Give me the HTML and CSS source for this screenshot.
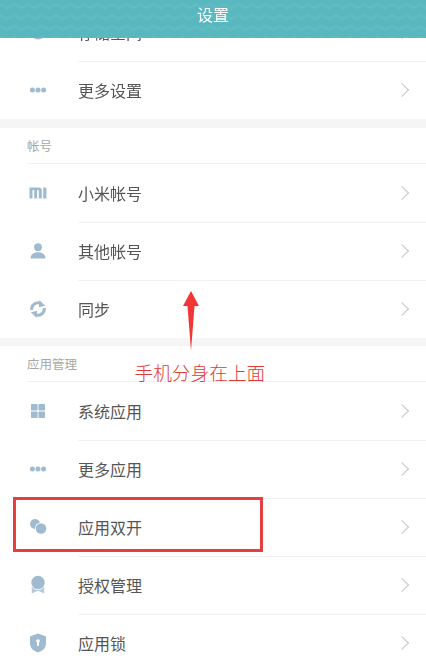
FILE: index.html
```html
<!DOCTYPE html>
<html lang="zh">
<head>
<meta charset="utf-8">
<title>设置</title>
<link rel="stylesheet" href="styles.css">
</head>
<body>
<div class="screen">
  <header class="topbar">
    <svg class="wave" aria-hidden="true">
      <defs>
        <pattern id="zig" width="28" height="11" patternUnits="userSpaceOnUse">
          <path d="M0 4 L7 8 L14 4 L21 8 L28 4" fill="none" stroke="#ffffff" stroke-opacity=".05" stroke-width="2.4"/>
        </pattern>
      </defs>
      <rect width="100%" height="100%" fill="url(#zig)"/>
    </svg>
    <span class="topbar-title">设置</span>
  </header>

  <main class="list">
    <section class="group">
      <div class="row">
        <svg class="icon" viewBox="0 0 20 20"><circle cx="10" cy="10" r="7.5" fill="#a5bfd2"/></svg>
        <span class="label">存储空间</span><span class="chev"></span>
      </div>
      <div class="row">
        <svg class="icon" viewBox="0 0 20 20"><g fill="#a0bbcf"><circle cx="4.4" cy="10" r="2.5"/><circle cx="10" cy="10" r="2.5"/><circle cx="15.6" cy="10" r="2.5"/></g></svg>
        <span class="label">更多设置</span><span class="chev"></span>
      </div>
    </section>

    <section class="group">
      <h2 class="group-title">帐号</h2>
      <div class="row">
        <svg class="icon" viewBox="0 0 20 20"><g fill="#a0bbcf"><path d="M1.5 4.500h9.500a2.800 2.800 0 0 1 2.800 2.800V15.500h-3V7.800a.8.8 0 0 0-.8-.8H9.100V15.500H6.200V7H4.500V15.500H1.500z"/><rect x="15.200" y="4.500" width="3.200" height="11"/></g></svg>
        <span class="label">小米帐号</span><span class="chev"></span>
      </div>
      <div class="row">
        <svg class="icon" viewBox="0 0 20 20"><g fill="#a0bbcf"><circle cx="10" cy="6.200" r="3.900"/><path d="M2.600 17.500c0-4.200 3-6.300 7.400-6.300s7.400 2.100 7.400 6.300z"/></g></svg>
        <span class="label">其他帐号</span><span class="chev"></span>
      </div>
      <div class="row">
        <svg class="icon" viewBox="0 0 20 20"><g fill="none" stroke="#a0bbcf" stroke-width="3"><path d="M3.700 11a6.400 6.400 0 0 1 9.200-6.500"/><path d="M16.300 9a6.400 6.400 0 0 1-9.200 6.500"/></g><g fill="#a0bbcf"><path d="M11.500 1.200 17.200 6.800 10.800 8.200z"/><path d="M8.500 18.800 2.800 13.200 9.200 11.800z"/></g></svg>
        <span class="label">同步</span><span class="chev"></span>
      </div>
    </section>

    <section class="group">
      <h2 class="group-title">应用管理</h2>
      <div class="row">
        <svg class="icon" viewBox="0 0 20 20"><g fill="#a0bbcf"><rect x="3" y="3" width="6.600" height="6.600" rx=".8"/><rect x="10.400" y="3" width="6.600" height="6.600" rx=".8"/><rect x="3" y="10.400" width="6.600" height="6.600" rx=".8"/><rect x="10.400" y="10.400" width="6.600" height="6.600" rx=".8"/></g></svg>
        <span class="label">系统应用</span><span class="chev"></span>
      </div>
      <div class="row">
        <svg class="icon" viewBox="0 0 20 20"><g fill="#a0bbcf"><circle cx="4.400" cy="10" r="2.500"/><circle cx="10" cy="10" r="2.500"/><circle cx="15.600" cy="10" r="2.500"/></g></svg>
        <span class="label">更多应用</span><span class="chev"></span>
      </div>
      <div class="row">
        <svg class="icon" viewBox="0 0 20 20"><circle cx="7" cy="7" r="5" fill="#a0bbcf"/><circle cx="13" cy="11.500" r="6" fill="#fff"/><circle cx="13" cy="11.500" r="5.300" fill="#a0bbcf"/></svg>
        <span class="label">应用双开</span><span class="chev"></span>
      </div>
      <div class="row">
        <svg class="icon" viewBox="0 0 20 20"><path d="M3.800 11.500V18.500L10 15.800 16.200 18.500V11.500z" fill="#b4cadb"/><circle cx="10" cy="7.500" r="7.500" fill="#fff"/><circle cx="10" cy="7.500" r="6.700" fill="#a0bbcf"/></svg>
        <span class="label">授权管理</span><span class="chev"></span>
      </div>
      <div class="row">
        <svg class="icon" viewBox="0 0 20 20"><path d="M10 .5 18 3.500V10.500C18 15 14.500 18 10 19.500 5.500 18 2 15 2 10.500V3.500z" fill="#a0bbcf"/><circle cx="10" cy="8" r="1.800" fill="#fff"/><rect x="9" y="8.500" width="2" height="4.500" fill="#fff"/></svg>
        <span class="label">应用锁</span><span class="chev"></span>
      </div>
    </section>
  </main>

  <svg class="arrow" viewBox="0 0 20 60" aria-hidden="true"><path d="M10 0 18 15H13.500L10 60 6.500 15H2z" fill="#f23535"/></svg>
  <div class="note">手机分身在上面</div>
  <div class="mark"></div>
</div>
</body>
</html>
```

FILE: styles.css
```css
* { box-sizing: border-box; }
html, body { margin: 0; padding: 0; }
body {
  font-family: "Noto Sans CJK SC", "Noto Sans", sans-serif;
  background: #f5f5f5;
}
.screen {
  position: relative;
  width: 426px;
  height: 671px;
  overflow: hidden;
  filter: blur(0.35px);
}
.topbar {
  position: absolute;
  top: 0;
  left: 0;
  right: 0;
  height: 38px;
  background: #59b8bf;
  display: flex;
  align-items: center;
  justify-content: center;
  z-index: 2;
  padding-bottom: 11px;
}
.wave {
  position: absolute;
  inset: 0;
  width: 100%;
  height: 100%;
}
.topbar-title {
  position: relative;
  color: #fff;
  font-size: 16px;
  line-height: 20px;
}
.list {
  padding-top: 3px;
  display: flex;
  flex-direction: column;
  gap: 9px;
}
.group { background: #fff; }
.group:last-child { margin-top: -1px; }
.group-title {
  margin: 0 0 0 27px;
  height: 36px;
  border-bottom: 1px solid #f1f1f1;
  font-size: 12.500px;
  font-weight: 400;
  line-height: 36px;
  color: #a8a8a8;
}
.row {
  position: relative;
  height: 58px;
  display: flex;
  align-items: center;
  padding-left: 27.500px;
  padding-right: 16px;
}
.row + .row::before {
  content: "";
  position: absolute;
  top: 0;
  left: 78px;
  right: 0;
  height: 1px;
  background: #f1f1f1;
}
.icon {
  width: 20px;
  height: 20px;
  flex: none;
}
.label {
  margin-left: 30.500px;
  flex: 1;
  font-size: 16px;
  line-height: 22px;
  color: #555;
}
.chev {
  width: 10px;
  height: 10px;
  border-top: 1.300px solid #c6c6c6;
  border-right: 1.300px solid #c6c6c6;
  transform: rotate(45deg);
  margin-right: 3px;
}
.arrow {
  position: absolute;
  left: 181px;
  top: 291px;
  width: 20px;
  height: 60px;
}
.note {
  position: absolute;
  left: 134.500px;
  top: 358px;
  font-size: 18.700px;
  line-height: 27px;
  font-weight: 300;
  color: #de3a3a;
  white-space: nowrap;
}
.mark {
  position: absolute;
  left: 13px;
  top: 497px;
  width: 250px;
  height: 55px;
  border: 3px solid #e63f3f;
}
```
